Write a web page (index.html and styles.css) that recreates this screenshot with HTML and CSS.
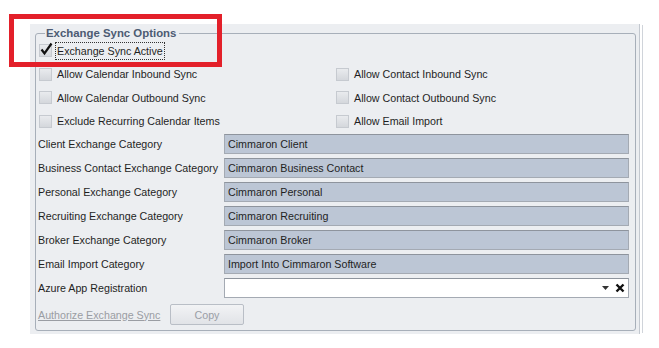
FILE: index.html
```html
<!DOCTYPE html>
<html lang="en">
<head>
    <meta charset="UTF-8">
    <title>Exchange Sync Options</title>
    <link rel="stylesheet" href="styles.css">
</head>
<body>
    <div class="page">
        <div class="panel">
            <fieldset class="group">
                <legend>Exchange Sync Options</legend>

                <div class="checks">
                    <label class="check active">
                        <span class="box checked">
                            <svg width="15" height="15" viewBox="0 0 15 15"><path d="M2.5 7.5 L5.5 11.5 L12.5 1.5" fill="none" stroke="#111" stroke-width="2.2"/></svg>
                        </span>
                        <span class="focus">Exchange Sync Active</span>
                    </label>
                    <span></span>

                    <label class="check"><span class="box"></span>Allow Calendar Inbound Sync</label>
                    <label class="check"><span class="box"></span>Allow Contact Inbound Sync</label>

                    <label class="check"><span class="box"></span>Allow Calendar Outbound Sync</label>
                    <label class="check"><span class="box"></span>Allow Contact Outbound Sync</label>

                    <label class="check"><span class="box"></span>Exclude Recurring Calendar Items</label>
                    <label class="check"><span class="box"></span>Allow Email Import</label>
                </div>

                <div class="fields">
                    <span class="label">Client Exchange Category</span>
                    <div class="field">Cimmaron Client</div>

                    <span class="label">Business Contact Exchange Category</span>
                    <div class="field">Cimmaron Business Contact</div>

                    <span class="label">Personal Exchange Category</span>
                    <div class="field">Cimmaron Personal</div>

                    <span class="label">Recruiting Exchange Category</span>
                    <div class="field">Cimmaron Recruiting</div>

                    <span class="label">Broker Exchange Category</span>
                    <div class="field">Cimmaron Broker</div>

                    <span class="label">Email Import Category</span>
                    <div class="field">Import Into Cimmaron Software</div>

                    <span class="label">Azure App Registration</span>
                    <div class="field combo">
                        <span class="combo-value"></span>
                        <svg class="arrow" width="7" height="4" viewBox="0 0 7 4"><path d="M0 0 H7 L3.5 4 Z" fill="#333"/></svg>
                        <svg class="clear" width="10" height="10" viewBox="0 0 10 10"><path d="M1.5 1.5 L8.5 8.5 M8.5 1.5 L1.5 8.5" stroke="#111" stroke-width="2.4"/></svg>
                    </div>
                </div>

                <div class="actions">
                    <a class="link" href="#">Authorize Exchange Sync</a>
                    <button class="btn" disabled>Copy</button>
                </div>
            </fieldset>
        </div>
    </div>
</body>
</html>
```

FILE: styles.css
```css
body {
    margin: 0;
    background: #fff;
    font-family: "Liberation Sans", Arial, sans-serif;
    font-size: 10.7px;
    color: #1f1f1f;
    white-space: nowrap;
}
.page {
    padding: 24px 0 0 30px;
    width: 610px;
    position: relative;
}
.page::after {
    /* red highlight drawn over the screenshot */
    content: "";
    position: absolute;
    left: 9px;
    top: 14px;
    width: 203px;
    height: 43px;
    border: 5px solid #e3202a;
}
.panel {
    background: #eceef1;
    border-right: 1px solid #c3c8cf;
    box-shadow: 3px 0 0 -1px #fff, 4px 0 0 -1px #d0d4da;
    padding: 2px 3px 3px 5px;
}
.group {
    margin: 0;
    padding: 0 4px 3px 2px;
    border: 1px solid #a7afb9;
    border-radius: 3px;
}
.group legend {
    margin-left: 7px;
    padding: 0 3px 0 1px;
    font-weight: bold;
    font-size: 11.4px;
    color: #4d5b73;
    line-height: 14px;
}
.checks {
    display: grid;
    grid-template-columns: 298px 1fr;
    grid-auto-rows: 23.5px;
    margin-top: -1px;
}
.check {
    display: flex;
    align-items: center;
    gap: 5px;
}
.check:nth-child(odd) {
    padding-left: 1px;
}
.box {
    width: 11px;
    height: 11px;
    border: 1px solid #c6cad0;
    background: linear-gradient(#e9ebee, #d4d7dc);
    flex: none;
    position: relative;
}
.box.checked svg {
    position: absolute;
    left: -1px;
    top: -3px;
}
.focus {
    outline: 1px dotted #333;
    outline-offset: 0;
    padding: 2px 1px;
    margin-left: -1px;
}
.fields {
    display: grid;
    grid-template-columns: 186px 405px;
    grid-auto-rows: 20px;
    row-gap: 4px;
    margin-top: 1px;
}
.label {
    display: flex;
    align-items: center;
}
.field {
    background: #bcc6d5;
    border: 1px solid #a4aab3;
    border-top-color: #8e949d;
    display: flex;
    align-items: center;
    padding: 0 3px;
    color: #1f1f1f;
}
.combo {
    background: #fff;
    gap: 6px;
}
.combo-value {
    flex: 1;
}
.actions {
    display: flex;
    align-items: center;
    height: 25px;
    margin-top: 4px;
}
.link {
    color: #9a9da3;
    width: 132px;
}
.btn {
    width: 74px;
    height: 21px;
    font-family: inherit;
    font-size: 10.7px;
    color: #9a9ea6;
    background: linear-gradient(#f2f3f5, #e1e3e7);
    border: 1px solid #b9bec6;
    border-radius: 2px;
}
```
